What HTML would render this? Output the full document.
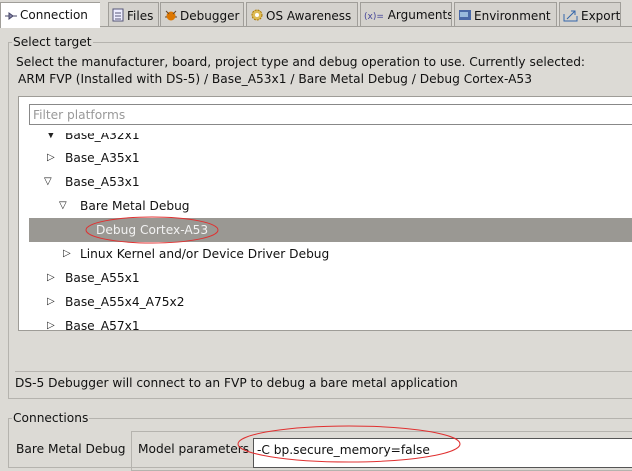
<!DOCTYPE html>
<html><head><style>
*{margin:0;padding:0;box-sizing:border-box}
body{width:632px;height:461px;overflow:hidden;background:#dcdad5;font-family:"DejaVu Sans",sans-serif;font-size:12.2px;color:#111;position:relative}
.a{position:absolute;white-space:nowrap}
.tab{position:absolute;top:2px;height:24px;border:1px solid #a09e99;border-bottom:none;background:#d4d2cd;padding:5px 0 0 3px;white-space:nowrap;overflow:hidden;font-size:12px}
.tab svg{vertical-align:-2px;margin-right:2px}
.row{position:absolute;left:28px;right:0;height:24px;line-height:24px}
.tri{position:absolute;font-size:10px;color:#222}
</style></head><body>
<div class="a" style="left:0;top:26px;width:632px;height:1px;background:#a09e99"></div>
<div class="tab" style="left:0;width:100px;background:#fff;height:26px;border-right:none"><svg width="14" height="10"><path d="M1 5h4M9 5h4M5 2v6l4-3z" stroke="#446" fill="#88a"/></svg>Connection</div>
<div class="tab" style="left:108px;width:51px"><svg width="13" height="14"><rect x="1" y="1" width="10" height="12" fill="#eef" stroke="#557"/><path d="M3 5h6M3 8h6M3 11h6" stroke="#557"/></svg>Files</div>
<div class="tab" style="left:160px;width:84px"><svg width="14" height="14"><circle cx="7" cy="8" r="4.5" fill="#d70"/><path d="M2 3l3 3M12 3l-3 3M1 9h2M11 9h2" stroke="#642"/></svg>Debugger</div>
<div class="tab" style="left:246px;width:112px"><svg width="14" height="14"><circle cx="7" cy="7" r="5" fill="#db5" stroke="#a70" stroke-dasharray="2 1"/><circle cx="7" cy="7" r="2" fill="#fff"/></svg>OS Awareness</div>
<div class="tab" style="left:360px;width:92px"><span style="color:#449;font-size:9px">(x)=</span> Arguments</div>
<div class="tab" style="left:454px;width:103px"><svg width="14" height="14"><rect x="1" y="2" width="12" height="10" fill="#4a6aa8"/><rect x="2" y="4" width="8" height="5" fill="#9bd"/></svg>Environment</div>
<div class="tab" style="left:559px;width:62px"><svg width="16" height="14"><path d="M1 6v7h13V8" stroke="#36a" fill="none"/><path d="M4 11l8-8M8 3h4v4" stroke="#36a" fill="none"/></svg>Export</div>

<div class="a" style="left:8px;top:42px;width:630px;height:357px;border:1px solid #b5b3ae;border-right:none"></div>
<div class="a" style="left:12px;top:35px;background:#dcdad5;padding:0 1px">Select target</div>
<div class="a" style="left:16px;top:55px">Select the manufacturer, board, project type and debug operation to use. Currently selected:</div>
<div class="a" style="left:18px;top:72px">ARM FVP (Installed with DS-5) / Base_A53x1 / Bare Metal Debug / Debug Cortex-A53</div>

<div class="a" style="left:18px;top:96px;width:614px;height:235px;border:1px solid #9e9c97;border-right:none;background:#fff;overflow:hidden">
 <div class="a" style="left:10px;top:7px;width:610px;height:21px;border:1px solid #888;border-right:none;color:#999;padding:3px 3px">Filter platforms</div>
 <div class="row" style="left:0;top:26px"><span class="tri" style="left:28px">▼</span><span class="a" style="left:46px">Base_A32x1</span></div>
 <div class="a" style="left:0;top:28px;width:620px;height:8px;background:#fff"></div>
 <div class="row" style="left:0;top:49px"><span class="tri" style="left:28px">▷</span><span class="a" style="left:46px">Base_A35x1</span></div>
 <div class="row" style="left:0;top:73px"><span class="tri" style="left:25px">▽</span><span class="a" style="left:46px">Base_A53x1</span></div>
 <div class="row" style="left:0;top:97px"><span class="tri" style="left:40px">▽</span><span class="a" style="left:61px">Bare Metal Debug</span></div>
 <div class="row" style="left:10px;top:121px;background:#9a9893;color:#f2f2f2"><span class="a" style="left:67px">Debug Cortex-A53</span></div>
 <div class="row" style="left:0;top:145px"><span class="tri" style="left:44px">▷</span><span class="a" style="left:61px">Linux Kernel and/or Device Driver Debug</span></div>
 <div class="row" style="left:0;top:169px"><span class="tri" style="left:28px">▷</span><span class="a" style="left:46px">Base_A55x1</span></div>
 <div class="row" style="left:0;top:193px"><span class="tri" style="left:28px">▷</span><span class="a" style="left:46px">Base_A55x4_A75x2</span></div>
 <div class="row" style="left:0;top:217px"><span class="tri" style="left:28px">▷</span><span class="a" style="left:46px">Base_A57x1</span></div>
</div>
<svg class="a" style="left:84px;top:215px" width="136" height="30"><ellipse cx="68" cy="15" rx="66" ry="13" fill="none" stroke="#e03030" stroke-width="1"/></svg>

<div class="a" style="left:15px;top:371px;width:617px;height:1px;background:#b5b3ae"></div>
<div class="a" style="left:15px;top:376px">DS-5 Debugger will connect to an FVP to debug a bare metal application</div>

<div class="a" style="left:8px;top:418px;width:630px;height:50px;border:1px solid #b5b3ae;border-right:none"></div>
<div class="a" style="left:12px;top:411px;background:#dcdad5;padding:0 1px">Connections</div>
<div class="a" style="left:16px;top:442px">Bare Metal Debug</div>
<div class="a" style="left:131px;top:431px;width:510px;height:40px;border:1px solid #b5b3ae;border-right:none"></div>
<div class="a" style="left:138px;top:442px">Model parameters</div>
<div class="a" style="left:253px;top:438px;width:400px;height:30px;border:1px solid #555;border-right:none;background:#fff;padding:4px 3px">-C bp.secure_memory=false</div>
<svg class="a" style="left:236px;top:424px" width="226" height="40"><ellipse cx="113" cy="20" rx="111" ry="18" fill="none" stroke="#e03030" stroke-width="1"/></svg>
</body></html>
